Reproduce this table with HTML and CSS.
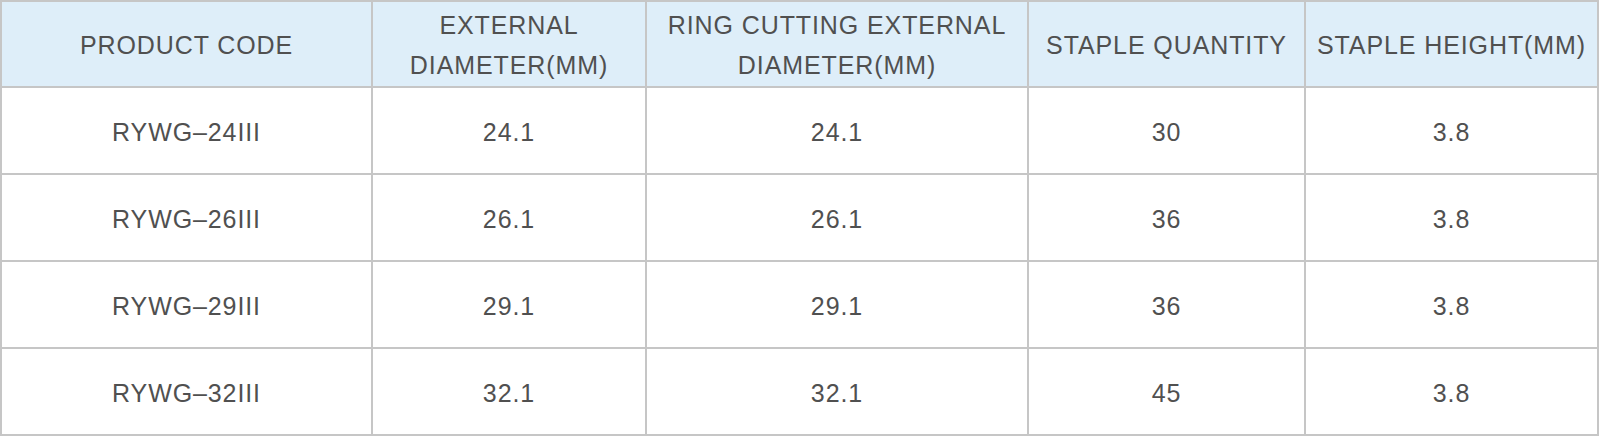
FILE: index.html
```html
<!DOCTYPE html>
<html lang="en">
<head>
    <meta charset="UTF-8">
    <meta name="viewport" content="width=device-width, initial-scale=1.0">
    <title>Product Specifications</title>
    <link rel="stylesheet" href="styles.css">
</head>
<body>
    <table class="spec-table">
        <thead>
            <tr>
                <th class="col-code">PRODUCT CODE</th>
                <th class="col-outer">EXTERNAL<br>DIAMETER(MM)</th>
                <th class="col-ring">RING CUTTING EXTERNAL<br>DIAMETER(MM)</th>
                <th class="col-qty">STAPLE QUANTITY</th>
                <th class="col-height">STAPLE HEIGHT(MM)</th>
            </tr>
        </thead>
        <tbody>
            <tr>
                <td>RYWG–24III</td>
                <td>24.1</td>
                <td>24.1</td>
                <td>30</td>
                <td>3.8</td>
            </tr>
            <tr>
                <td>RYWG–26III</td>
                <td>26.1</td>
                <td>26.1</td>
                <td>36</td>
                <td>3.8</td>
            </tr>
            <tr>
                <td>RYWG–29III</td>
                <td>29.1</td>
                <td>29.1</td>
                <td>36</td>
                <td>3.8</td>
            </tr>
            <tr>
                <td>RYWG–32III</td>
                <td>32.1</td>
                <td>32.1</td>
                <td>45</td>
                <td>3.8</td>
            </tr>
        </tbody>
    </table>
</body>
</html>
```

FILE: styles.css
```css
body {
    margin: 0;
    padding: 0;
    background: #fff;
    font-family: 'Liberation Sans', Arial, sans-serif;
    color: #505050;
}

.spec-table {
    width: 1599px;
    table-layout: fixed;
    border-collapse: separate;
    border-spacing: 0;
    border-top: 2px solid #c6c6c6;
    border-left: 2px solid #c6c6c6;
}

.spec-table th,
.spec-table td {
    box-sizing: border-box;
    padding: 0 5px;
    border-right: 2px solid #c6c6c6;
    border-bottom: 2px solid #c6c6c6;
    text-align: center;
    vertical-align: middle;
    font-size: 25px;
    font-weight: normal;
    letter-spacing: 0.9px;
    line-height: 40px;
}

.spec-table th {
    height: 86px;
    padding-top: 2px;
    background: #deeef9;
}

.spec-table td {
    height: 87px;
    padding-top: 3px;
}

.col-code { width: 371px; }
.col-outer { width: 274px; }
.col-ring { width: 382px; }
.col-qty { width: 277px; }
.col-height { width: 293px; }
```
